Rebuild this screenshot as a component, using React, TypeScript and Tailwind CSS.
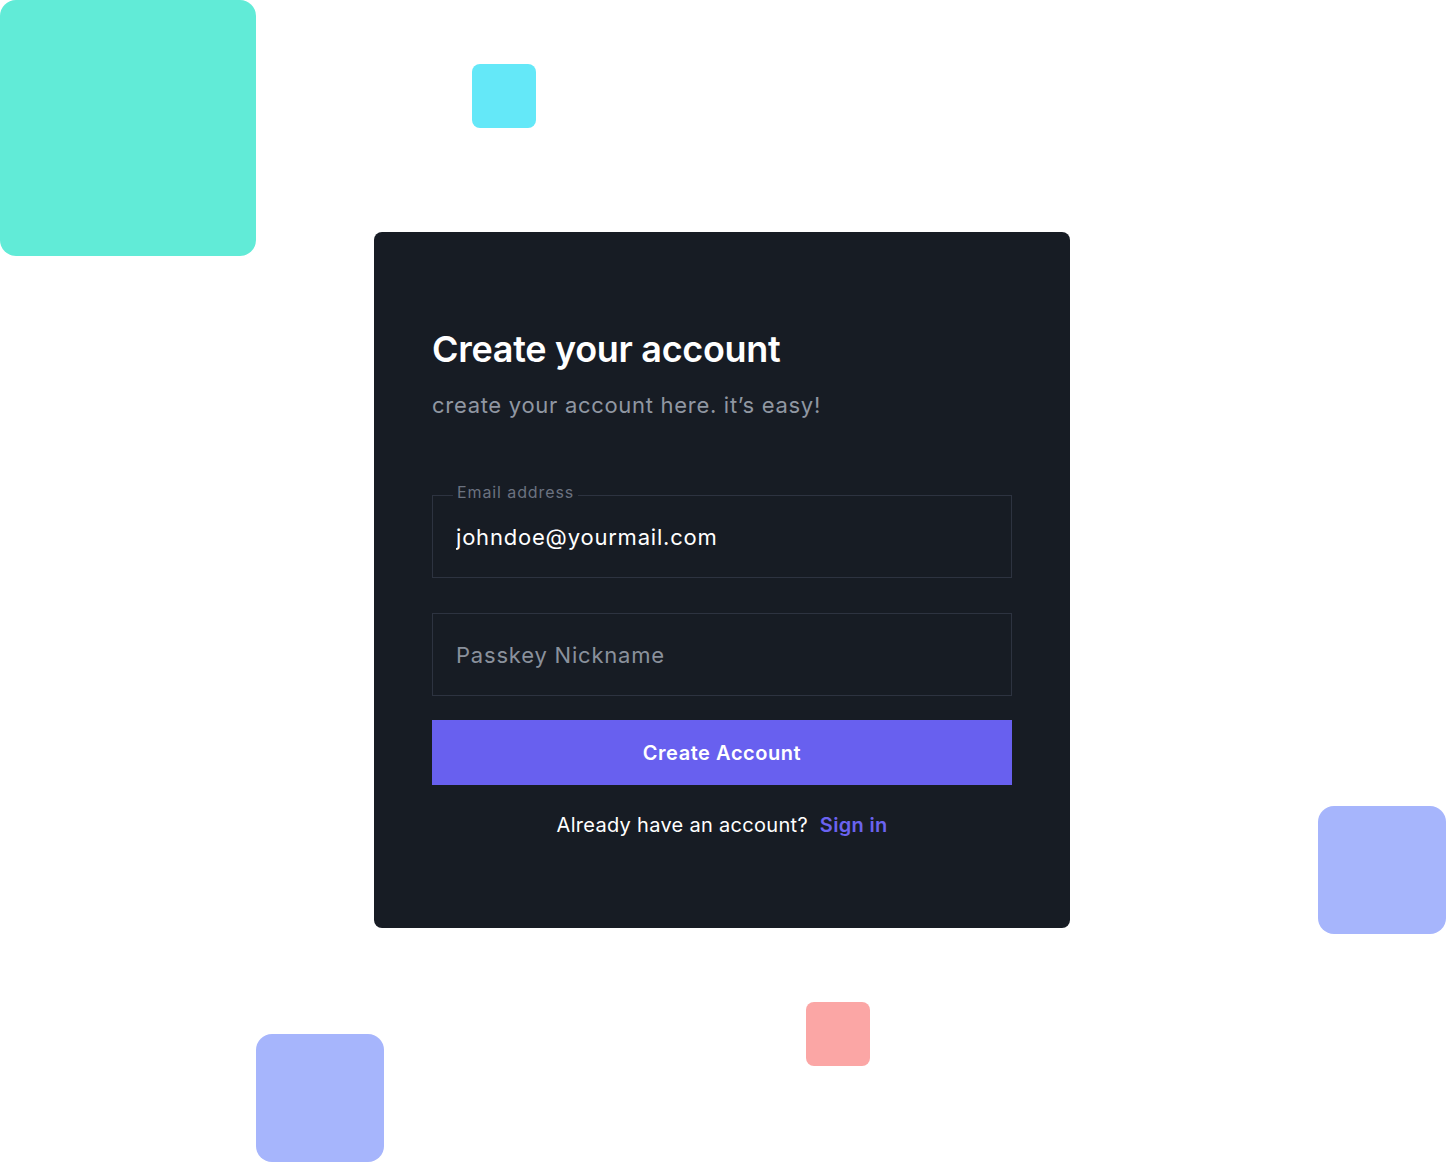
import React from "react";

export default function App() {
  const font = { fontFamily: "Inter, 'Noto Sans', sans-serif" };
  return (
    <div
      className="relative w-full h-[1162px] overflow-hidden bg-white flex items-center justify-center pb-[2px] pr-[2px]"
      style={font}
    >
      {/* decorative squares */}
      <div className="absolute left-0 top-0 w-[256px] h-[256px] rounded-2xl bg-[#61ebd7]" />
      <div className="absolute left-[472px] top-[64px] w-[64px] h-[64px] rounded-lg bg-[#64e8f8]" />
      <div className="absolute left-[1318px] top-[806px] w-[128px] h-[128px] rounded-2xl bg-[#a6b5fc]" />
      <div className="absolute left-[256px] top-[1034px] w-[128px] h-[128px] rounded-2xl bg-[#a6b5fc]" />
      <div className="absolute left-[806px] top-[1002px] w-[64px] h-[64px] rounded-lg bg-[#fba6a5]" />

      <div className="relative w-[696px] h-[696px] rounded-lg bg-[#171c24] px-[58px] pt-[97px] flex flex-col">
        <h1 className="text-4xl leading-[40px] font-semibold tracking-[-0.3px] text-white">
          Create your account
        </h1>
        <p className="mt-[20px] text-[22px] leading-[32px] tracking-[0.7px] text-[#9097a2]">
          create your account here. it’s easy!
        </p>

        <div className="mt-[74px] relative h-[83px] border border-[#2d3340]">
          <span className="absolute left-[20px] top-[-16px] px-1 bg-[#171c24] text-base leading-6 tracking-[0.9px] text-[#6b7280]">
            Email address
          </span>
          <input
            readOnly
            value="johndoe@yourmail.com"
            className="w-full h-full bg-transparent pl-[23px] text-[22px] tracking-[0.8px] text-white outline-none"
          />
        </div>

        <div className="mt-[35px] h-[83px] border border-[#2d3340]">
          <input
            placeholder="Passkey Nickname"
            className="w-full h-full bg-transparent pl-[23px] text-[22px] tracking-[0.8px] text-white placeholder:text-[#8a919c] outline-none"
          />
        </div>

        <button className="mt-[24px] w-full h-[65px] bg-[#6860ef] text-white text-xl font-semibold tracking-[0.55px]">
          Create Account
        </button>

        <p className="mt-[26px] text-center text-xl leading-7 tracking-[0.3px] text-white">
          Already have an account?{" "}
          <a href="#" className="ml-[6px] font-semibold text-[#6b63f0]">
            Sign in
          </a>
        </p>
      </div>
    </div>
  );
}
